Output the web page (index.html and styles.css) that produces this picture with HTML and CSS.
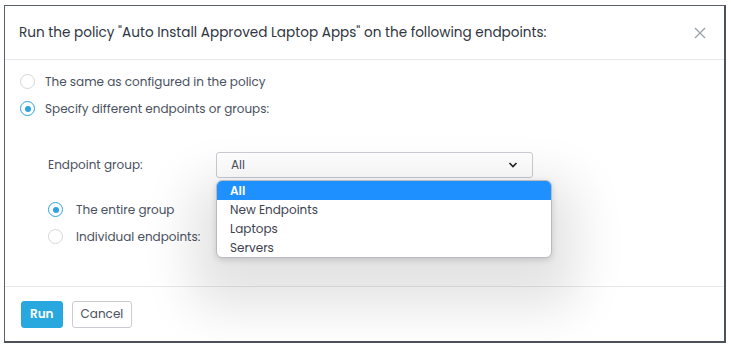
FILE: index.html
```html
<!DOCTYPE html>
<html lang="en">
<head>
    <meta charset="UTF-8">
    <meta name="viewport" content="width=device-width, initial-scale=1.0">
    <title>Run policy</title>
    <link rel="stylesheet" href="styles.css">
</head>
<body>
    <div class="window">
        <div class="dialog">
            <div class="dialog-header">
                <h2>Run the policy "Auto Install Approved Laptop Apps" on the following endpoints:</h2>
                <span class="close">
                    <svg width="12" height="12" viewBox="0 0 12 12"><path d="M1 1 L11 11 M11 1 L1 11" stroke="#9aa0a6" stroke-width="1.3" fill="none"/></svg>
                </span>
            </div>
            <div class="dialog-body">
                <label class="radio"><span class="dot"></span>The same as configured in the policy</label>
                <label class="radio"><span class="dot checked"></span>Specify different endpoints or groups:</label>

                <div class="group-box">
                    <div class="field">
                        <span class="field-label">Endpoint group:</span>
                        <div class="select-wrap">
                            <div class="select">
                                <span>All</span>
                                <svg width="10" height="6" viewBox="0 0 10 6"><path d="M1.5 1 L5 4.5 L8.5 1" stroke="#222" stroke-width="1.6" fill="none"/></svg>
                            </div>
                            <ul class="options">
                                <li class="active">All</li>
                                <li>New Endpoints</li>
                                <li>Laptops</li>
                                <li>Servers</li>
                            </ul>
                        </div>
                    </div>
                    <div class="sub-radios">
                        <label class="radio"><span class="dot checked"></span>The entire group</label>
                        <label class="radio"><span class="dot"></span>Individual endpoints:</label>
                    </div>
                </div>
            </div>
            <div class="dialog-footer">
                <button class="btn btn-primary">Run</button>
                <button class="btn">Cancel</button>
            </div>
        </div>
    </div>
</body>
</html>
```

FILE: styles.css
```css
body {
    margin: 0;
    padding: 5px 4px 6px 4px;
    background: #fff;
    font-family: "Poppins", "Inter", "Noto Sans", sans-serif;
    color: #3d4350;
}
.window {
    width: 719px;
    height: 335px;
    border-top: 1px solid #5a6068;
    border-left: 1px solid #5a6068;
    border-right: 2px solid #4b5159;
    border-bottom: 2px solid #4b5159;
    overflow: hidden;
}
.dialog {
    display: flex;
    flex-direction: column;
    height: 100%;
    background: #fff;
}
.dialog-header {
    height: 53px;
    display: flex;
    align-items: center;
    justify-content: space-between;
    padding: 0 18px 0 14px;
    border-bottom: 1px solid #e6e8eb;
}
.dialog-header h2 {
    margin: 0;
    font-size: 13.6px;
    font-weight: 400;
    color: #2f3542;
}
.close {
    display: flex;
}
.dialog-body {
    flex: 1;
    padding: 8px 15px 0 15px;
    font-size: 12px;
}
.radio {
    display: flex;
    align-items: center;
    gap: 10px;
    height: 27px;
    color: #4a5160;
}
.dot {
    width: 15px;
    height: 15px;
    border-radius: 50%;
    border: 1px solid #d3d6db;
    box-sizing: border-box;
    display: inline-flex;
    align-items: center;
    justify-content: center;
}
.dot.checked {
    border-color: #2ea3dd;
}
.dot.checked::after {
    content: "";
    width: 6px;
    height: 6px;
    border-radius: 50%;
    background: #2ea3dd;
}
.group-box {
    padding: 30px 0 0 28px;
}
.field {
    display: flex;
    align-items: flex-start;
}
.field-label {
    width: 168px;
    line-height: 26px;
    color: #4a5160;
}
.select-wrap {
    position: relative;
}
.select {
    width: 317px;
    height: 26px;
    box-sizing: border-box;
    border: 1px solid #c9cdd3;
    border-radius: 3px;
    display: flex;
    align-items: center;
    justify-content: space-between;
    padding: 0 14px 0 14px;
    color: #4a5160;
}
.options {
    position: absolute;
    top: 28px;
    left: 0;
    width: 334px;
    margin: 0;
    padding: 0;
    list-style: none;
    background: #fff;
    border: 1px solid #b8bcc2;
    border-radius: 6px;
    overflow: hidden;
    box-shadow: 0 25px 50px 25px rgba(0, 0, 0, 0.11), 0 2px 6px rgba(0, 0, 0, 0.15);
    z-index: 2;
}
.options li {
    height: 19px;
    line-height: 19px;
    padding-left: 13px;
    color: #3d4350;
}
.options li.active {
    background: #1e90ff;
    color: #fff;
    font-weight: 600;
}
.sub-radios {
    padding: 18px 0 0 0;
}
.sub-radios .radio {
    gap: 13px;
}
.dialog-footer {
    height: 54px;
    border-top: 1px solid #e6e8eb;
    display: flex;
    align-items: center;
    gap: 9px;
    padding: 0 16px;
}
.btn {
    font-family: inherit;
    font-size: 12px;
    height: 27px;
    padding: 0 8px;
    border: 1px solid #c9cdd3;
    border-radius: 3px;
    background: #fff;
    color: #4a5160;
}
.btn-primary {
    background: #29a8e0;
    border-color: #29a8e0;
    color: #fff;
    font-weight: 600;
}
```
